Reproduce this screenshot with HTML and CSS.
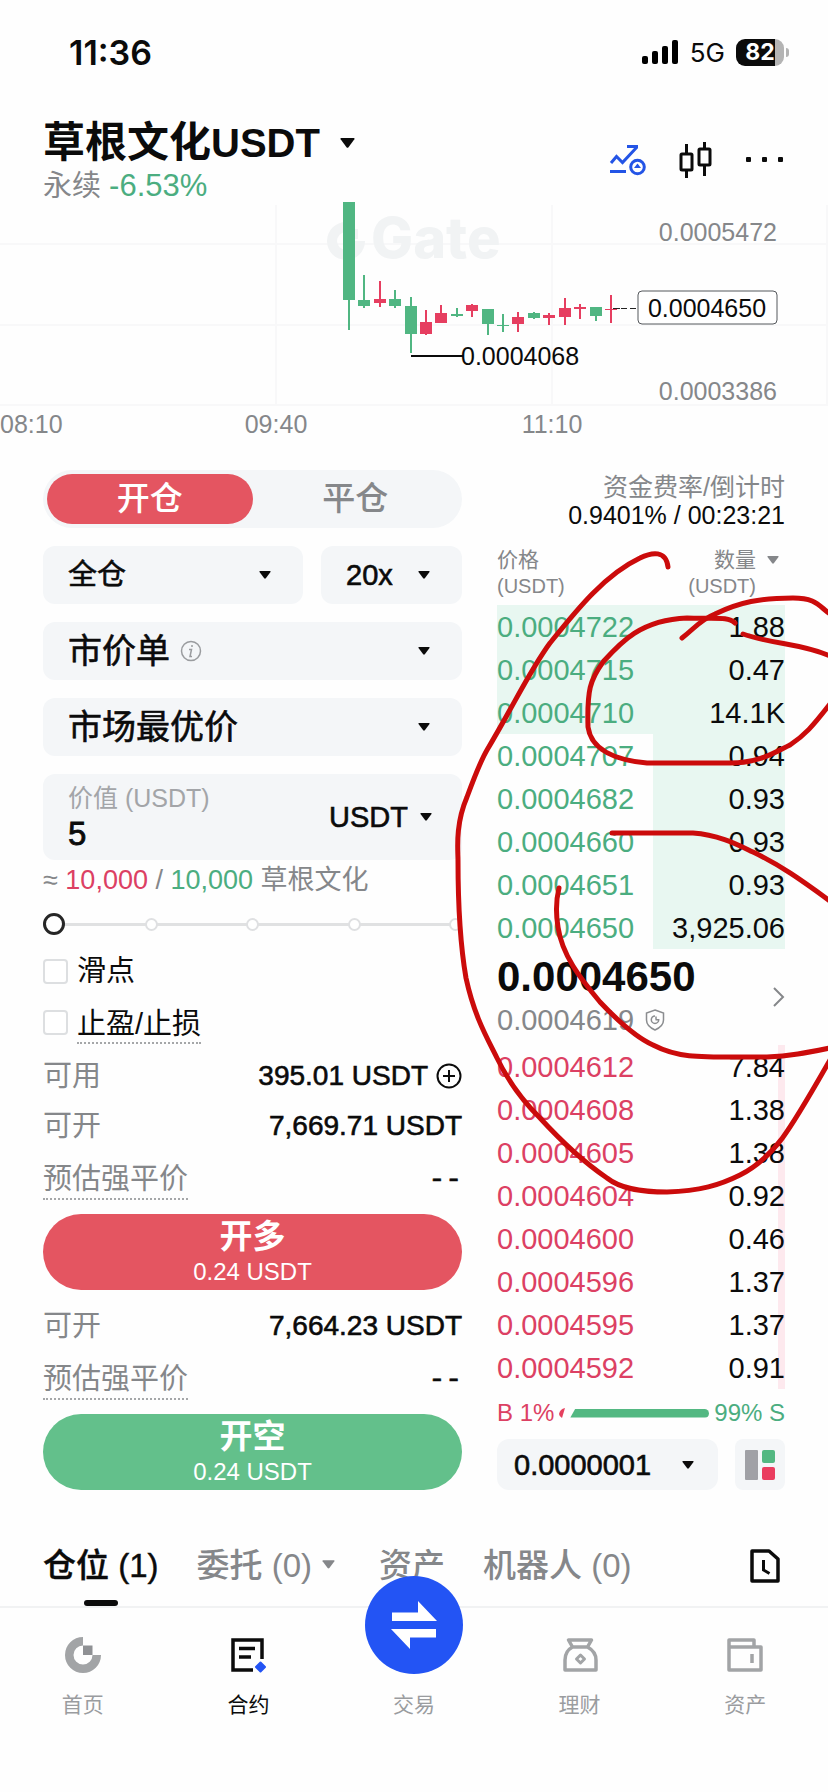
FILE: index.html
```html
<!DOCTYPE html>
<html lang="zh-CN">
<head>
<meta charset="utf-8">
<meta name="viewport" content="width=device-width, initial-scale=1">
<title>草根文化USDT 永续合约</title>
<link rel="stylesheet" href="styles.css">
</head>
<body>
<svg class="defs" aria-hidden="true">
  <symbol id="caret" viewBox="0 0 12 8"><path d="M1 0h10q1 0 .5 1L6.800 7.300q-.8.900-1.600 0L.500 1Q0 0 1 0z" fill="currentColor"/></symbol>
</svg>
<div class="page">
  <div class="status">
    <span class="status-time">11:36</span>
    <span class="status-right">
      <svg class="signal" viewBox="0 0 38 24" aria-hidden="true"><rect x="1" y="16" width="6" height="8" rx="2"/><rect x="11" y="11" width="6" height="13" rx="2"/><rect x="21" y="6" width="6" height="18" rx="2"/><rect x="31" y="0" width="6" height="24" rx="2"/></svg>
      <span class="network">5G</span>
      <span class="battery"><span class="battery-body">82</span><span class="battery-tip"></span></span>
    </span>
  </div>

  <header class="header">
    <div>
      <h1 class="title">草根文化<span class="title-latin">USDT</span><svg class="caret caret-title"><use href="#caret"/></svg></h1>
      <p class="subtitle">永续 <span class="green change">-6.53%</span></p>
    </div>
    <div class="tools">
      <button class="tool" aria-label="行情"><svg width="38" height="36" viewBox="0 0 38 36" fill="none" stroke="#2354e6" stroke-width="3"><path d="M2 21l5.500-6.500 6 6L28 5M18 4.500h11M1 29.500h16"/><circle cx="28.500" cy="25" r="6.800"/><path d="M28.500 21.500l3.500 4.500h-7z" fill="#2354e6" stroke="none"/></svg></button>
      <button class="tool" aria-label="K线"><svg width="34" height="36" viewBox="0 0 34 36" fill="none" stroke="#0b0b0b" stroke-width="3"><path d="M7.500 2v10M7.500 28v8M25.500 0v7M25.500 23v11"/><rect x="2" y="12" width="11" height="16" rx="1"/><rect x="20" y="7" width="11" height="16" rx="1"/></svg></button>
      <button class="tool" aria-label="更多"><svg width="40" height="6" viewBox="0 0 40 6" fill="#0b0b0b"><rect x="1" width="5" height="5" rx="1"/><rect x="17" width="5" height="5" rx="1"/><rect x="33" width="5" height="5" rx="1"/></svg></button>
    </div>
  </header>

  <svg class="chart" viewBox="0 202 828 240" role="img" aria-label="价格走势">
    <g stroke="#f8f8f9" stroke-width="2"><path d="M276 205V405M552 205V405M827 205V405M0 244H828M0 325H828M0 405H828"/></g>
    <g fill="#f1f3f4">
      <path d="M346 222a19 19 0 1 0 19 19h-10a9 9 0 1 1-9-9z"/><path d="M348 229h10v10h-10z"/>
      <text class="watermark" x="371" y="258">Gate</text>
    </g>
    <g class="up">
      <path d="M349 300V330M364 275V308M395 290V308M411 297V353M457 308V317M488 309V335M503 314V332M534 312V319M596 307V321"/>
      <path class="body" d="M343 202h12v98h-12zM358 300h12v6h-12zM389 299h12v7h-12zM405 306h12v28h-12zM451 314h12v2h-12zM482 309h12v15h-12zM497 325h12v1h-12zM528 313h12v5h-12zM590 307h12v9h-12z"/>
    </g>
    <g class="down">
      <path d="M380 281V307M426 310V335M441 305V323M472 304V317M518 312V332M549 313V325M565 298V325M580 304V319M611 295V323"/>
      <path class="body" d="M374 299h12v4h-12zM420 322h12v12h-12zM435 313h12v10h-12zM466 305h12v6h-12zM512 317h12v7h-12zM543 315h12v3h-12zM559 308h12v9h-12zM574 307h12v2h-12zM605 309h12v1h-12z"/>
    </g>
    <path d="M411 356H463" stroke="#0b0b0b" stroke-width="2"/>
    <path d="M613 308.500h7m1 0h6m3 0h6" stroke="#222" stroke-width="1"/>
    <rect x="638" y="291" width="139" height="33" rx="4" fill="#fff" stroke="#55585c"/>
    <text class="axis ink" x="461" y="365">0.0004068</text>
    <text class="axis ink" x="707" y="317" text-anchor="middle">0.0004650</text>
    <g class="axis">
      <text x="777" y="241" text-anchor="end">0.0005472</text>
      <text x="777" y="400" text-anchor="end">0.0003386</text>
      <text x="0" y="433">08:10</text>
      <text x="276" y="433" text-anchor="middle">09:40</text>
      <text x="552" y="433" text-anchor="middle">11:10</text>
    </g>
  </svg>

  <main class="trade">
    <form class="order">
      <div class="segment">
        <button type="button" class="segment-item active">开仓</button>
        <button type="button" class="segment-item">平仓</button>
      </div>
      <div class="pair">
        <div class="field"><select class="select" aria-label="仓位模式"><option>全仓</option></select><svg class="caret"><use href="#caret"/></svg></div>
        <div class="field field-lever"><select class="select latin" aria-label="杠杆"><option>20x</option></select><svg class="caret"><use href="#caret"/></svg></div>
      </div>
      <div class="field">
        <select class="select large" aria-label="订单类型"><option>市价单</option></select>
        <svg class="info" viewBox="0 0 22 22" fill="none" stroke="#9a9c9f"><circle cx="11" cy="11" r="9.500" stroke-width="1.500"/><path d="M9 9.500h2.500L10 16.500h2" stroke-width="1.500"/><circle cx="12" cy="6" r="1" fill="#9a9c9f" stroke="none"/></svg>
        <svg class="caret"><use href="#caret"/></svg>
      </div>
      <div class="field">
        <select class="select large" aria-label="价格类型"><option>市场最优价</option></select>
        <svg class="caret"><use href="#caret"/></svg>
      </div>
      <div class="field value-field">
        <div class="value-box">
          <label class="value-label" for="amount">价值 (USDT)</label>
          <input class="value-input" id="amount" type="text" value="5">
        </div>
        <select class="select latin" aria-label="单位"><option>USDT</option></select>
        <svg class="caret"><use href="#caret"/></svg>
      </div>
      <p class="approx"><span class="approx-sign">≈</span> <span class="red">10,000</span> / <span class="green">10,000</span> 草根文化</p>
      <div class="slider">
        <div class="slider-dots"><i></i><i></i><i></i><i></i><i></i></div>
        <input class="slider-range" type="range" min="0" max="100" value="0" aria-label="仓位比例">
      </div>
      <label class="check"><input type="checkbox"><span>滑点</span></label>
      <label class="check check-tall"><input type="checkbox"><span class="dotted">止盈/止损</span></label>
      <div class="line"><span>可用</span><span class="amount">395.01 USDT<svg class="plus" viewBox="0 0 26 26" fill="none" stroke="#0b0b0b" stroke-width="2"><circle cx="13" cy="13" r="11.500"/><path d="M13 7v12M7 13h12"/></svg></span></div>
      <div class="line"><span>可开</span><span class="amount">7,669.71 USDT</span></div>
      <div class="line line-tall"><span class="dotted">预估强平价</span><span class="amount dashes">--</span></div>
      <button type="button" class="submit long"><strong>开多</strong><span>0.24 USDT</span></button>
      <div class="line"><span>可开</span><span class="amount">7,664.23 USDT</span></div>
      <div class="line line-tall"><span class="dotted">预估强平价</span><span class="amount dashes">--</span></div>
      <button type="button" class="submit short"><strong>开空</strong><span>0.24 USDT</span></button>
    </form>

    <section class="book">
      <div class="funding"><span class="funding-label">资金费率/倒计时</span><span>0.9401% / 00:23:21</span></div>
      <div class="book-head">
        <div>价格<br><small>(USDT)</small></div>
        <div class="book-qty"><div>数量<br><small>(USDT)</small></div><svg class="caret"><use href="#caret"/></svg></div>
      </div>
      <table class="rows bids">
        <tbody>
          <tr class="full"><td>0.0004722</td><td>1.88</td></tr>
          <tr class="full"><td>0.0004715</td><td>0.47</td></tr>
          <tr class="full"><td>0.0004710</td><td>14.1K</td></tr>
          <tr><td>0.0004707</td><td>0.94</td></tr>
          <tr><td>0.0004682</td><td>0.93</td></tr>
          <tr><td>0.0004660</td><td>0.93</td></tr>
          <tr><td>0.0004651</td><td>0.93</td></tr>
          <tr><td>0.0004650</td><td>3,925.06</td></tr>
        </tbody>
      </table>
      <div class="last">
        <div>
          <div class="last-price">0.0004650</div>
          <div class="mark-price">0.0004619<svg class="shield" viewBox="0 0 20 22" fill="none" stroke="#8b8d90" stroke-width="1.500"><path d="M10 1l8.500 3v7c0 5-4 8-8.500 10C5.500 19 1.500 16 1.500 11V4z"/><path d="M10 7a3.700 3.700 0 1 0 3.700 3.700H10.500M11 7.500v3"/></svg></div>
        </div>
        <svg class="chevron" viewBox="0 0 12 20" fill="none" stroke="#85878a" stroke-width="2"><path d="M1 1l9 9-9 9"/></svg>
      </div>
      <table class="rows asks">
        <tbody>
          <tr><td>0.0004612</td><td>7.84</td></tr>
          <tr><td>0.0004608</td><td>1.38</td></tr>
          <tr><td>0.0004605</td><td>1.38</td></tr>
          <tr><td>0.0004604</td><td>0.92</td></tr>
          <tr><td>0.0004600</td><td>0.46</td></tr>
          <tr><td>0.0004596</td><td>1.37</td></tr>
          <tr><td>0.0004595</td><td>1.37</td></tr>
          <tr><td>0.0004592</td><td>0.91</td></tr>
        </tbody>
      </table>
      <div class="ratio">
        <span class="red">B 1%</span>
        <svg class="ratio-tick" viewBox="0 0 6 10"><path d="M6 0L3 10Q0 8 0 6 1 1 6 0z" fill="#e5405e"/></svg>
        <span class="ratio-bar"></span>
        <span class="green">99% S</span>
      </div>
      <div class="precision">
        <div class="field field-step"><select class="select latin" aria-label="精度"><option>0.0000001</option></select><svg class="caret"><use href="#caret"/></svg></div>
        <button class="layout-btn" aria-label="盘口布局"><svg width="30" height="30" viewBox="0 0 30 30"><rect width="13" height="30" rx="1" fill="#a0a1a6"/><rect x="17" width="13" height="13" rx="2" fill="#53b882"/><rect x="17" y="17" width="13" height="13" rx="2" fill="#ea3d5f"/></svg></button>
      </div>
    </section>
  </main>

  <div class="tabs">
    <button class="tab tab-active">仓位 (1)</button>
    <button class="tab">委托 (0)<svg class="caret caret-tab"><use href="#caret"/></svg></button>
    <button class="tab">资产</button>
    <button class="tab">机器人 (0)</button>
    <button class="history" aria-label="历史"><svg width="30" height="34" viewBox="0 0 30 34" fill="none" stroke="#0b0b0b" stroke-width="3.500"><path d="M2 2h17l9 8v22H2z" stroke-linejoin="round"/><path d="M13.500 11v10l6 3.500" stroke-width="3"/></svg></button>
  </div>

  <nav class="nav">
    <a class="nav-item" href="#home"><svg viewBox="0 0 36 36"><path d="M18 0a18 18 0 1 0 18 18h-8.500a9.500 9.500 0 1 1-9.500-9.500z" fill="#a2a4a6"/><path d="M18 8.500h9.500V18H18z" fill="#8f9194"/></svg><span>首页</span></a>
    <a class="nav-item current" href="#futures"><svg viewBox="0 0 36 36" fill="none" stroke="#0b0b0b" stroke-width="3.500"><path d="M23 33H3V3h29v19M9 11.500h16M9 20h12"/><path d="M30.500 25.500l4.500 4.500-4.500 4.500-4.500-4.500z" fill="#2354f4" stroke="#2354f4" stroke-width="2" stroke-linejoin="round"/></svg><span>合约</span></a>
    <a class="nav-item" href="#trade"><span class="swap"><svg viewBox="0 0 48 48" fill="#fff"><path d="M2 11.500h26V0l19 20H2zM46 28v8.500H20V48L1 28z"/></svg></span><span>交易</span></a>
    <a class="nav-item" href="#earn"><svg viewBox="0 0 36 36" fill="none" stroke="#a2a4a6" stroke-width="3.500" stroke-linejoin="round"><path d="M6.500 3h23l-4 7h-15zM10.500 10C5 13 3 18 3 23v10h31V23c0-5-3-10-8.500-13"/><path d="M18.500 18l4 4-4 4-4-4z" stroke-width="3"/></svg><span>理财</span></a>
    <a class="nav-item" href="#assets"><svg viewBox="0 0 36 36" fill="none" stroke="#a2a4a6" stroke-width="3.500" stroke-linejoin="round"><path d="M2 10V3h25v7M2 10h32v23H2zM25 17v9"/></svg><span>资产</span></a>
  </nav>

  <svg class="ink-marks" viewBox="0 0 828 1792" fill="none" stroke="#cb0b0b" stroke-width="5" stroke-linecap="round" aria-hidden="true">
    <path d="M668 567C666 550 652 552 640 558C604 575 575 612 550 643C530 670 515 703 487 750C480 762 474 778 467 797C455 825 458 850 458 860C458 915 462 955 466 978C474 1015 486 1036 497 1058C510 1085 525 1103 540 1118C562 1142 585 1163 607 1178C622 1190 645 1192 667 1192C700 1191 720 1185 740 1175C775 1157 790 1130 830 1060"/>
    <path d="M682 638C695 628 700 620 715 614C740 602 760 598 793 598C815 598 818 605 830 614"/>
    <path d="M735 623C728 616 715 619 687 618C640 620 620 643 603 662C590 680 587 690 588 727C592 755 625 761 647 763H730C760 763 775 752 790 745C805 735 812 727 830 704"/>
    <path d="M743 634C775 645 800 643 830 656"/>
    <path d="M612 833H693C720 835 740 846 753 852C780 865 800 879 830 901"/>
    <path d="M559 888C556 900 556 915 558 927C562 955 580 978 600 1002C618 1021 635 1037 653 1045C680 1059 700 1057 767 1057C790 1056 805 1053 830 1048"/>
  </svg>
</div>
</body>
</html>
```
FILE: styles.css
```css
:root {
  --ink: #0b0b0b;
  --grey: #85878a;
  --fill: #f4f6f8;
  --green: #4bad80;
  --red: #dc4063;
}

* { box-sizing: border-box; }

body {
  margin: 0;
  background: #fefefe;
  color: var(--ink);
  font-family: "Liberation Sans", "Noto Sans CJK SC", sans-serif;
  font-size: 28px;
}

button, select, input {
  margin: 0;
  padding: 0;
  border: 0;
  background: none;
  color: inherit;
  font: inherit;
}

h1, p { margin: 0; }

.page {
  position: relative;
  display: flex;
  flex-direction: column;
  min-height: 100vh;
  overflow: hidden;
}

.defs { position: absolute; width: 0; height: 0; }
.green { color: var(--green); }
.red { color: var(--red); }

.caret {
  flex: none;
  width: 12px;
  height: 8px;
}

/* Status bar */
.status {
  display: flex;
  align-items: center;
  justify-content: space-between;
  height: 104px;
  padding: 0 39px 0 69px;
}

.status-time { font: 600 34px Inter, sans-serif; }
.status-right { display: flex; align-items: center; gap: 11px; }
.signal { width: 38px; height: 24px; }
.network { font: 400 26px Inter, sans-serif; }
.battery { display: flex; align-items: center; gap: 2px; }

.battery-body {
  width: 48px;
  border-radius: 9px;
  background: linear-gradient(to right, #0b0b0b 82%, #b4b4b4 82%);
  color: #fff;
  font: 700 23px/27px Inter, sans-serif;
  text-align: center;
}

.battery-tip {
  width: 3px;
  height: 9px;
  border-radius: 0 3px 3px 0;
  background: #b4b4b4;
}

/* Header */
.header {
  display: flex;
  justify-content: space-between;
  height: 98px;
  padding: 9px 43px 0;
}

.title {
  display: flex;
  align-items: center;
  font-size: 42px;
  font-weight: 700;
  line-height: 60px;
}

.title-latin { font-size: 40px; }
.caret-title { width: 15px; height: 10px; margin-left: 20px; }
.subtitle { color: var(--grey); font-size: 29px; line-height: 26px; }
.change { font-size: 31px; }
.tools { display: flex; align-items: center; gap: 32px; height: 94px; }
.tool { display: flex; }

/* Chart */
.chart { display: block; width: 100%; }
.watermark { font: 800 56px Inter, sans-serif; }
.axis { font-size: 25px; fill: var(--grey); }
.axis.ink { fill: var(--ink); }
.up, .down { stroke-width: 2; }
.up { stroke: #50b682; fill: #50b682; }
.down { stroke: #e63e60; fill: #e63e60; }
.body { stroke: none; }

/* Trading area */
.trade {
  display: grid;
  grid-template-columns: 419fr 288fr;
  gap: 35px;
  padding: 28px 43px 0;
}

.order { display: flex; flex-direction: column; min-width: 0; }

.segment {
  display: grid;
  grid-template-columns: 1fr 1fr;
  height: 58px;
  margin-bottom: 18px;
  padding: 4px;
  border-radius: 29px;
  background: var(--fill);
}

.segment-item {
  border-radius: 25px;
  color: var(--grey);
  font-size: 33px;
  font-weight: 500;
  line-height: 50px;
}

.segment-item.active { background: #e45561; color: #fff; }
.pair { display: grid; grid-template-columns: 260fr 141fr; gap: 18px; }

.field {
  display: flex;
  align-items: center;
  height: 58px;
  margin-bottom: 18px;
  padding: 0 32px 0 25px;
  border-radius: 12px;
  background: var(--fill);
}

.field > .caret { margin-left: auto; }

.select {
  appearance: none;
  font-size: 29px;
  line-height: 44px;
  -webkit-text-stroke: 0.6px currentColor;
}

.large { font-size: 34px; }
.latin { font-size: 29px; }
.info { width: 22px; height: 22px; margin-left: 10px; }

.value-field { height: 86px; margin-bottom: 0; padding-right: 30px; }
.value-box { display: flex; flex: 1; flex-direction: column; min-width: 0; }
.value-label { color: #a3a5a8; font-size: 25px; line-height: 34px; }

.value-input {
  width: 100%;
  height: 38px;
  font-size: 33px;
  -webkit-text-stroke: 0.8px currentColor;
}

.value-field > .caret { margin-left: 12px; }

.approx { height: 40px; color: var(--grey); font-size: 27px; line-height: 40px; }
.approx-sign { font-size: 27px; }

.slider { position: relative; height: 48px; }

.slider-dots {
  display: flex;
  align-items: center;
  justify-content: space-between;
  height: 48px;
  background: linear-gradient(#e0e1e2, #e0e1e2) center / 100% 3px no-repeat;
}

.slider-dots i {
  width: 13px;
  height: 13px;
  border: 2px solid #dfe0e2;
  border-radius: 50%;
  background: #fff;
}

.slider-range {
  position: absolute;
  inset: 0;
  width: 100%;
  height: 100%;
  appearance: none;
}

.slider-range::-webkit-slider-thumb {
  width: 22px;
  height: 22px;
  border: 3px solid #262626;
  border-radius: 50%;
  background: #fff;
  appearance: none;
}

.check {
  display: flex;
  align-items: center;
  gap: 9px;
  height: 46px;
  font-size: 29px;
  line-height: 40px;
}

.check input {
  width: 25px;
  height: 25px;
  border: 2px solid #dddfe1;
  border-radius: 4px;
  background: #fff;
  appearance: none;
}

.check-tall { height: 57px; }
.dotted { border-bottom: 2px dotted #a5a7a9; line-height: 38px; }
.check .dotted { padding-top: 5px; line-height: 36px; }

.line {
  display: flex;
  align-items: center;
  justify-content: space-between;
  height: 50px;
  color: var(--grey);
  font-size: 29px;
  line-height: 40px;
}

.line-tall { height: 56px; padding-top: 2px; }

.amount {
  display: flex;
  align-items: center;
  gap: 8px;
  color: var(--ink);
  font-size: 28px;
  -webkit-text-stroke: 0.6px currentColor;
}

.dashes { font-family: "Liberation Mono", monospace; }
.plus { width: 26px; height: 26px; }

.submit {
  display: flex;
  flex-direction: column;
  align-items: center;
  justify-content: center;
  height: 76px;
  margin: 7px 0 11px;
  border-radius: 38px;
  color: #fff;
}

.submit strong { font-size: 33px; line-height: 40px; }
.submit span { font-size: 24px; line-height: 30px; }
.long { background: #e45561; }
.short { margin-bottom: 0; background: #63c08b; }

/* Order book */
.book { display: flex; flex-direction: column; min-width: 0; }

.funding {
  display: flex;
  flex-direction: column;
  height: 77px;
  padding-top: 3px;
  font-size: 25px;
  line-height: 28px;
  text-align: right;
}

.funding-label { color: var(--grey); }

.book-head {
  display: flex;
  justify-content: space-between;
  height: 58px;
  color: var(--grey);
  font-size: 21px;
  line-height: 26px;
}

.book-head small { font-size: 20px; }
.book-qty { display: flex; gap: 11px; padding-right: 6px; text-align: right; }
.book-qty .caret { margin-top: 9px; }

.rows {
  width: 100%;
  border-collapse: collapse;
  font-size: 29px;
}

.rows td { height: 43px; padding: 2px 0 0; line-height: 41px; }
.rows td:last-child { text-align: right; }
.bids td:first-child { color: var(--green); }
.asks td:first-child { color: var(--red); }
.bids { background: linear-gradient(#e8f7f1, #e8f7f1) right / 46% 100% no-repeat; }
.bids .full { background: #e8f7f1; }
.asks { background: linear-gradient(#fde9ee, #fde9ee) right / 7px 100% no-repeat; }

.last {
  display: flex;
  align-items: center;
  justify-content: space-between;
  height: 96px;
}

.last-price { font-size: 42px; font-weight: 700; line-height: 46px; }

.mark-price {
  display: flex;
  align-items: center;
  gap: 11px;
  color: var(--grey);
  font-size: 29px;
  line-height: 40px;
}

.shield { width: 20px; height: 22px; }
.chevron { width: 12px; height: 20px; }

.ratio {
  display: flex;
  align-items: center;
  gap: 5px;
  height: 48px;
  font-size: 24px;
}

.ratio-tick { width: 6px; height: 10px; }

.ratio-bar {
  flex: 1;
  height: 9px;
  border-radius: 0 5px 5px 0;
  background: #53b882;
  clip-path: polygon(5px 0, 100% 0, 100% 100%, 0 100%);
}

.precision { display: grid; grid-template-columns: 221fr 50fr; gap: 17px; margin-top: 2px; }
.field-step { height: 51px; margin: 0; padding: 0 24px 0 17px; }
.layout-btn { display: flex; align-items: center; justify-content: center; height: 51px; border-radius: 8px; background: var(--fill); }

/* Position tabs */
.tabs {
  display: flex;
  gap: 38px;
  height: 83px;
  margin-top: 35px;
  padding: 0 48px 0 43px;
  border-bottom: 2px solid #f1f2f3;
}

.tab {
  position: relative;
  display: flex;
  align-items: center;
  padding-bottom: 6px;
  color: var(--grey);
  font-size: 33px;
  font-weight: 500;
  white-space: nowrap;
}

.tab-active { color: var(--ink); -webkit-text-stroke: 0.4px currentColor; }

.tab-active::after {
  content: "";
  position: absolute;
  bottom: 0;
  left: 50%;
  width: 34px;
  height: 6px;
  margin-left: -17px;
  border-radius: 3px;
  background: var(--ink);
}

.caret-tab { width: 13px; height: 9px; margin: 4px 6px 0 10px; }
.history { display: flex; align-items: center; margin-left: auto; }

/* Bottom navigation */
.nav { display: grid; grid-template-columns: repeat(5, 1fr); padding-top: 29px; }

.nav-item {
  position: relative;
  display: flex;
  flex-direction: column;
  align-items: center;
  justify-content: flex-end;
  gap: 17px;
  height: 83px;
  color: #9a9c9f;
  font-size: 21px;
  line-height: 30px;
  text-decoration: none;
}

.nav-item > svg { width: 36px; height: 36px; }
.nav-item.current { color: var(--ink); }

.swap {
  position: absolute;
  bottom: 46px;
  display: flex;
  align-items: center;
  justify-content: center;
  width: 98px;
  height: 98px;
  border-radius: 50%;
  background: #2354f4;
}

.swap svg { width: 48px; height: 48px; }

.ink-marks {
  position: absolute;
  top: 0;
  left: 0;
  width: 100%;
  pointer-events: none;
}
```
